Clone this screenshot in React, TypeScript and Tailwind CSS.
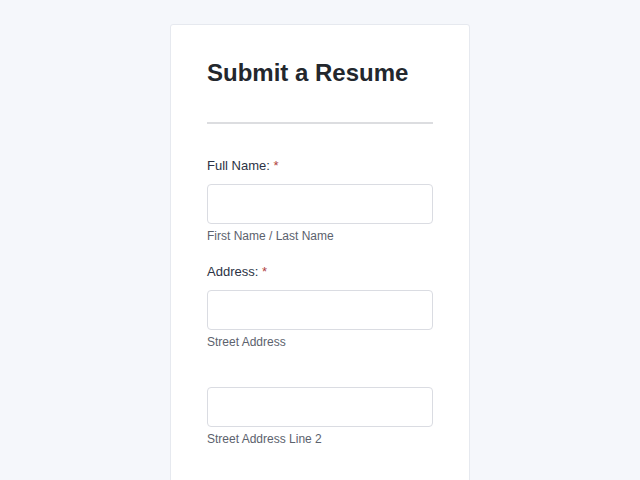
import React from 'react'

export default function App() {
  const fields = [
    { label: 'Full Name:', required: true, hint: 'First Name / Last Name' },
    { label: 'Address:', required: true, hint: 'Street Address' },
    { label: '', required: false, hint: 'Street Address Line 2' },
  ]

  return (
    <div
      className="min-h-screen h-[480px] overflow-hidden bg-[#f5f7fb] flex justify-center pt-6"
      style={{ fontFamily: '"Liberation Sans", Arial, sans-serif' }}
    >
      <div className="w-[300px] h-[600px] bg-white border border-[#e6e9ef] rounded-[3px] px-[36px] pt-[32px]">
        <h1 className="text-[24px] leading-[32px] font-bold text-[#23272d]">Submit a Resume</h1>
        <div className="mt-[33px] h-[2px] bg-[#dcdde0]" />

        <div className="mt-[33px]">
          {fields.map((f, i) => (
            <div key={i} className={i === 0 ? '' : i === 1 ? 'mt-[19px]' : 'mt-[37px]'}>
              {f.label && (
                <div className="mb-[10px] h-[17px] text-[13px] leading-[17px] text-[#2c3345]">
                  {f.label}
                  {f.required && <span className="text-[#b0413e]"> *</span>}
                </div>
              )}
              <input
                type="text"
                className="block w-full h-[40px] rounded-[4px] border border-[#dadce2] bg-white px-2 outline-none"
              />
              <div className="mt-[4px] text-[12px] leading-[16px] text-[#5c626d]">{f.hint}</div>
            </div>
          ))}
        </div>
      </div>
    </div>
  )
}
